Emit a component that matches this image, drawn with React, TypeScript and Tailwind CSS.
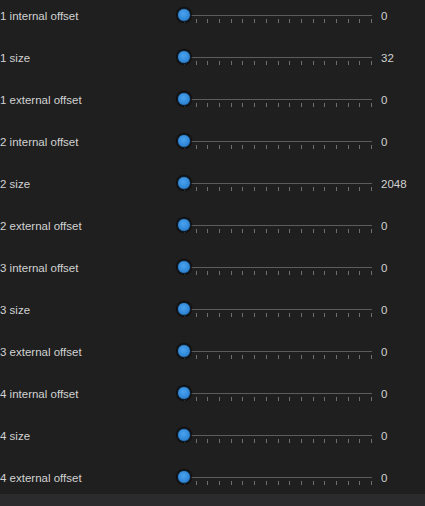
import React from "react";

const rows: [string, string][] = [
  ["1 internal offset", "0"],
  ["1 size", "32"],
  ["1 external offset", "0"],
  ["2 internal offset", "0"],
  ["2 size", "2048"],
  ["2 external offset", "0"],
  ["3 internal offset", "0"],
  ["3 size", "0"],
  ["3 external offset", "0"],
  ["4 internal offset", "0"],
  ["4 size", "0"],
  ["4 external offset", "0"],
];

const ticks = Array.from({ length: 17 }, (_, i) => i);

function Slider() {
  return (
    <div className="relative w-[204px] h-[32px] shrink-0">
      <div className="absolute left-[7px] right-[9px] top-[15px] h-px bg-[#5c5c5c]" />
      <div className="absolute left-[7px] right-[9px] top-[19px] h-[4px] flex justify-between">
        {ticks.map((t) => (
          <div key={t} className="w-px h-[4px] bg-[#6e6e6e]" />
        ))}
      </div>
      <div className="absolute left-0 top-[8px] w-[14px] h-[14px] rounded-full border border-[#0d1a26] bg-[radial-gradient(circle_at_45%_40%,#4aa3ef_0%,#2f86d6_60%,#1d5f9e_100%)] shadow-[0_0_1px_1px_rgba(0,0,0,0.6)]" />
    </div>
  );
}

export default function App() {
  return (
    <div
      className="w-[425px] h-[506px] bg-[#1f1f1f] flex flex-col overflow-hidden text-[#d2d2d2] text-[11.5px]"
      style={{ fontFamily: '"Liberation Sans", Arial, sans-serif' }}
    >
      <div className="flex flex-col gap-[10px]">
        {rows.map(([label, value], i) => (
          <div key={i} className="flex items-center h-[32px]">
            <div className="w-[177px] shrink-0 leading-none mt-[1px]">{label}</div>
            <Slider />
            <div className="leading-none mt-[1px]">{value}</div>
          </div>
        ))}
      </div>
      <div className="mt-auto h-[13px] bg-[#2b2b2e]" />
    </div>
  );
}
